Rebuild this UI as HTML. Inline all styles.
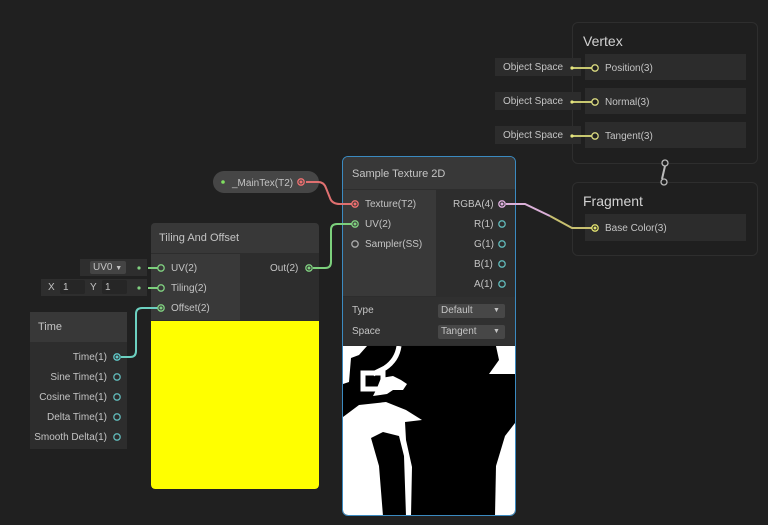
<!DOCTYPE html>
<html><head><meta charset="utf-8"><style>
*{margin:0;padding:0;box-sizing:border-box}
body{width:768px;height:525px;background:#202020;position:relative;overflow:hidden;font-family:"Liberation Sans",sans-serif;font-size:10px;color:#c4c4c4}
.a{position:absolute}
.t{position:absolute;white-space:nowrap;line-height:12px}
.h{font-size:11px}
</style></head><body>

<!-- Vertex -->
<div class="a" style="left:572px;top:22px;width:186px;height:142px;border:1px solid #2e2e2e;border-radius:6px;background:#1f1f1f"></div>
<div class="t" style="left:583px;top:33px;font-size:14px;line-height:16px;color:#d2d2d2">Vertex</div>
<div class="a" style="left:585px;top:54px;width:161px;height:26px;background:#2c2c2c"></div>
<div class="a" style="left:585px;top:88px;width:161px;height:26px;background:#2c2c2c"></div>
<div class="a" style="left:585px;top:122px;width:161px;height:26px;background:#2c2c2c"></div>
<div class="t" style="left:605px;top:63px">Position(3)</div>
<div class="t" style="left:605px;top:97px">Normal(3)</div>
<div class="t" style="left:605px;top:131px">Tangent(3)</div>
<div class="a" style="left:495px;top:58px;width:86px;height:18px;background:#2c2c2c"></div>
<div class="a" style="left:495px;top:92px;width:86px;height:18px;background:#2c2c2c"></div>
<div class="a" style="left:495px;top:126px;width:86px;height:18px;background:#2c2c2c"></div>
<div class="t" style="left:503px;top:62px">Object Space</div>
<div class="t" style="left:503px;top:96px">Object Space</div>
<div class="t" style="left:503px;top:130px">Object Space</div>

<!-- Fragment -->
<div class="a" style="left:572px;top:182px;width:186px;height:74px;border:1px solid #2e2e2e;border-radius:6px;background:#1f1f1f"></div>
<div class="t" style="left:583px;top:193px;font-size:14px;line-height:16px;color:#d2d2d2">Fragment</div>
<div class="a" style="left:585px;top:214px;width:161px;height:27px;background:#2c2c2c"></div>
<div class="t" style="left:605px;top:223px">Base Color(3)</div>

<!-- MainTex pill -->
<div class="a" style="left:213px;top:171px;width:106px;height:22px;border-radius:11px;background:#464646"></div>
<div class="t" style="left:232px;top:178px">_MainTex(T2)</div>

<!-- Sample Texture 2D -->
<div class="a" style="left:342px;top:156px;width:174px;height:360px;border:1.5px solid #3b8ac0;border-radius:6px;background:#2d2d2d;overflow:hidden">
 <div class="a" style="left:0;top:0;width:172px;height:32px;background:#383838"></div>
 <div class="a" style="left:0;top:33px;width:93px;height:106px;background:#393939"></div>
 <div class="a" style="left:93px;top:33px;width:80px;height:106px;background:#2d2d2d"></div>
 <div class="a" style="left:0;top:140px;width:172px;height:48px;background:#303030"></div>
 <div class="a" style="left:95px;top:147px;width:67px;height:14px;background:#474747;border-radius:2px"></div>
 <div class="a" style="left:95px;top:168px;width:67px;height:14px;background:#474747;border-radius:2px"></div>
 <svg class="a" style="left:0;top:189px" width="172" height="170" viewBox="0 0 172 170">
  <rect width="172" height="170" fill="#000"/>
  <path d="M0 0 H24 L16 9 L8 12 L6 36 L0 38Z" fill="#fff"/>
  <path d="M56 0 Q54 14 42 22 L30 28" stroke="#fff" stroke-width="5" fill="none"/>
  <rect x="20" y="27" width="20" height="16" stroke="#fff" stroke-width="5" fill="none"/>
  <path d="M38 32 L50 30 L58 34 L64 38 L60 44 L50 44 L44 48 L30 50 L34 42Z" fill="#fff"/>
  <path d="M0 71 L16 59 L43 56 L63 64 L79 74 L62 76 L63 94 L69 121 L68 170 H0Z" fill="#fff"/>
  <path d="M28 92 L40 86 L56 90 L61 110 L63 170 H40 L36 120Z" fill="#000"/>
  <path d="M153 0 H172 V28 H146 L156 14Z" fill="#fff"/>
  <path d="M172 77 V170 H152 L153 120 L162 90Z" fill="#fff"/>
 </svg>
</div>
<div class="t h" style="left:352px;top:168px">Sample Texture 2D</div>
<div class="t" style="left:365px;top:199px">Texture(T2)</div>
<div class="t" style="left:365px;top:219px">UV(2)</div>
<div class="t" style="left:365px;top:239px">Sampler(SS)</div>
<div class="t" style="left:453px;top:199px">RGBA(4)</div>
<div class="t" style="left:474px;top:219px">R(1)</div>
<div class="t" style="left:474px;top:239px">G(1)</div>
<div class="t" style="left:474px;top:259px">B(1)</div>
<div class="t" style="left:474px;top:279px">A(1)</div>
<div class="t" style="left:352px;top:305px">Type</div>
<div class="t" style="left:352px;top:326px">Space</div>
<div class="t" style="left:441px;top:305px">Default</div>
<div class="t" style="left:441px;top:326px">Tangent</div>
<div class="t" style="left:493px;top:305px;font-size:7px">▼</div>
<div class="t" style="left:493px;top:326px;font-size:7px">▼</div>

<!-- Tiling and Offset -->
<div class="a" style="left:151px;top:223px;width:168px;height:266px;border-radius:4px;background:#2d2d2d;overflow:hidden">
 <div class="a" style="left:0;top:0;width:168px;height:30px;background:#383838"></div>
 <div class="a" style="left:0;top:31px;width:89px;height:66px;background:#393939"></div>
 <div class="a" style="left:0;top:98px;width:168px;height:168px;background:#ffff00;border-radius:0 0 4px 4px"></div>
</div>
<div class="t h" style="left:159px;top:232px">Tiling And Offset</div>
<div class="t" style="left:171px;top:263px">UV(2)</div>
<div class="t" style="left:171px;top:283px">Tiling(2)</div>
<div class="t" style="left:171px;top:303px">Offset(2)</div>
<div class="t" style="left:270px;top:263px">Out(2)</div>
<div class="a" style="left:80px;top:259px;width:67px;height:17px;background:#2e2e2e"></div>
<div class="a" style="left:90px;top:261px;width:36px;height:13px;background:#444;border-radius:2px"></div>
<div class="t" style="left:93px;top:262px">UV0 <span style="font-size:7px">▼</span></div>
<div class="a" style="left:41px;top:279px;width:106px;height:17px;background:#2e2e2e"></div>
<div class="a" style="left:60px;top:280px;width:25px;height:14px;background:#262626;border-radius:2px"></div>
<div class="a" style="left:102px;top:280px;width:25px;height:14px;background:#262626;border-radius:2px"></div>
<div class="t" style="left:48px;top:282px">X</div><div class="t" style="left:63px;top:282px">1</div>
<div class="t" style="left:90px;top:282px">Y</div><div class="t" style="left:105px;top:282px">1</div>

<!-- Time -->
<div class="a" style="left:30px;top:312px;width:97px;height:137px;background:#2d2d2d"></div>
<div class="a" style="left:30px;top:312px;width:97px;height:30px;background:#383838"></div>
<div class="t h" style="left:38px;top:321px">Time</div>
<div class="t" style="right:661px;top:352px">Time(1)</div>
<div class="t" style="right:661px;top:372px">Sine Time(1)</div>
<div class="t" style="right:661px;top:392px">Cosine Time(1)</div>
<div class="t" style="right:661px;top:412px">Delta Time(1)</div>
<div class="t" style="right:661px;top:432px">Smooth Delta(1)</div>

<!-- wires and ports -->
<svg class="a" style="left:0;top:0" width="768" height="525">
 <g fill="none" stroke-width="2">
  <path d="M306 182 H318 Q324 182 326 188 L330 198 Q332 204 340 204 H355" stroke="#e07070"/>
  <path d="M313 268 H325 Q331 268 331 262 V230 Q331 224 337 224 H355" stroke="#7cd07c"/>
  <path d="M121 357 H130 Q136 357 136 351 V314 Q136 308 142 308 H161" stroke="#6cd0c0"/>
  <path d="M148 268 H161 M148 288 H161" stroke="#7cd07c"/>
  <path d="M506 204 H525 L550 216" stroke="#dbb0d8"/>
  <path d="M550 216 L572 228 H595" stroke="#c8c070"/>
  <path d="M573 68 H595 M573 102 H595 M573 136 H595" stroke="#c8c870"/>
  <path d="M665 166 L662 179" stroke="#bbb"/>
 </g>
 <g stroke-width="1.3">
  <circle cx="665" cy="163" r="3" fill="#202020" stroke="#bbb"/>
  <circle cx="664" cy="182" r="3" fill="#202020" stroke="#bbb"/>
  <circle cx="595" cy="68" r="3.2" fill="#202020" stroke="#d8d880"/>
  <circle cx="595" cy="102" r="3.2" fill="#202020" stroke="#d8d880"/>
  <circle cx="595" cy="136" r="3.2" fill="#202020" stroke="#d8d880"/>
  <circle cx="572" cy="68" r="1.6" fill="#e8e880"/>
  <circle cx="572" cy="102" r="1.6" fill="#e8e880"/>
  <circle cx="572" cy="136" r="1.6" fill="#e8e880"/>
  <circle cx="595" cy="228" r="3.2" fill="#202020" stroke="#e0e070"/><circle cx="595" cy="228" r="1.5" fill="#e0e070"/>
  <circle cx="223" cy="182" r="1.8" fill="#80e060"/>
  <circle cx="301" cy="182" r="3.2" fill="#464646" stroke="#f07070"/><circle cx="301" cy="182" r="1.5" fill="#f07070"/>
  <circle cx="355" cy="204" r="3.2" fill="#393939" stroke="#f07070"/><circle cx="355" cy="204" r="1.5" fill="#f07070"/>
  <circle cx="355" cy="224" r="3.2" fill="#393939" stroke="#80d080"/><circle cx="355" cy="224" r="1.5" fill="#80d080"/>
  <circle cx="355" cy="244" r="3.2" fill="#393939" stroke="#aaa"/>
  <circle cx="502" cy="204" r="3.2" fill="#2d2d2d" stroke="#e0b0e0"/><circle cx="502" cy="204" r="1.5" fill="#e0b0e0"/>
  <circle cx="502" cy="224" r="3.2" fill="#2d2d2d" stroke="#60b8b8"/>
  <circle cx="502" cy="244" r="3.2" fill="#2d2d2d" stroke="#60b8b8"/>
  <circle cx="502" cy="264" r="3.2" fill="#2d2d2d" stroke="#60b8b8"/>
  <circle cx="502" cy="284" r="3.2" fill="#2d2d2d" stroke="#60b8b8"/>
  <circle cx="161" cy="268" r="3.2" fill="#393939" stroke="#80d080"/>
  <circle cx="161" cy="288" r="3.2" fill="#393939" stroke="#80d080"/>
  <circle cx="161" cy="308" r="3.2" fill="#393939" stroke="#80d080"/><circle cx="161" cy="308" r="1.5" fill="#80d080"/>
  <circle cx="139" cy="268" r="1.6" fill="#80d080"/>
  <circle cx="139" cy="288" r="1.6" fill="#80d080"/>
  <circle cx="309" cy="268" r="3.2" fill="#2d2d2d" stroke="#80d080"/><circle cx="309" cy="268" r="1.5" fill="#80d080"/>
  <circle cx="117" cy="357" r="3.2" fill="#2d2d2d" stroke="#60c8c8"/><circle cx="117" cy="357" r="1.5" fill="#60c8c8"/>
  <circle cx="117" cy="377" r="3.2" fill="#2d2d2d" stroke="#60b8b8"/>
  <circle cx="117" cy="397" r="3.2" fill="#2d2d2d" stroke="#60b8b8"/>
  <circle cx="117" cy="417" r="3.2" fill="#2d2d2d" stroke="#60b8b8"/>
  <circle cx="117" cy="437" r="3.2" fill="#2d2d2d" stroke="#60b8b8"/>
 </g>
</svg>
</body></html>
